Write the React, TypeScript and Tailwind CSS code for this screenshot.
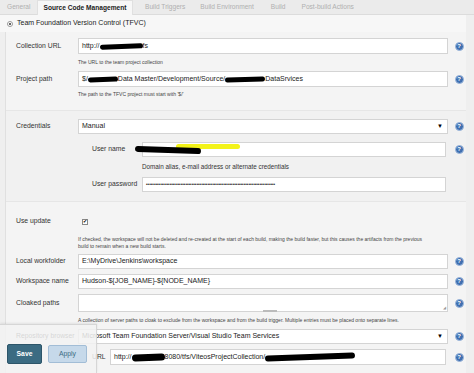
import React from "react";

const Help = () => (
  <div className="w-[18px] flex justify-center items-center shrink-0">
    <span className="ml-[4px] w-[9px] h-[9px] rounded-full bg-[#3f6fb0] border border-[#9db8dc] text-white text-[6px] font-bold leading-[7px] text-center">?</span>
  </div>
);

const Blob = ({ w, h = 6 }: { w: number; h?: number }) => (
  <span className="inline-block bg-black rounded-full align-middle -rotate-2" style={{ width: w, height: h }} />
);

const Input = ({ children, h = 15 }: { children?: React.ReactNode; h?: number }) => (
  <div className="flex-1 bg-white border border-[#d4d4d4] flex items-center pl-[3px] text-[7px] text-[#222] whitespace-nowrap overflow-hidden" style={{ height: h }}>
    {children}
  </div>
);

const Select = ({ children }: { children: React.ReactNode }) => (
  <div className="flex-1 h-[15px] bg-white border border-[#d4d4d4] flex items-center pl-[3px] pr-[4px] text-[7px] text-[#222] whitespace-nowrap">
    <span className="flex-1">{children}</span>
    <span className="text-[6px] text-black">▼</span>
  </div>
);

const Row = ({ label, children, help = true, mt = 0 }: { label: string; children: React.ReactNode; help?: boolean; mt?: number }) => (
  <div className="flex items-center" style={{ marginTop: mt }}>
    <div className="w-[62px] shrink-0 text-[6.8px] text-[#333]">{label}</div>
    {children}
    {help ? <Help /> : <div className="w-[18px] shrink-0" />}
  </div>
);

const HelpText = ({ children, h, pt }: { children: React.ReactNode; h: number; pt: number }) => (
  <div className="pl-[62px] text-[5px] leading-[7px] text-[#444]" style={{ height: h, paddingTop: pt }}>
    {children}
  </div>
);

export default function App() {
  return (
    <div className="relative w-[474px] h-[373px] overflow-hidden bg-[#efefef]" style={{ fontFamily: '"Liberation Sans", Arial, sans-serif' }}>
      {/* tabs */}
      <div className="h-[15px] flex items-stretch bg-[#ebebeb] border-b border-[#dcdcdc] text-[6.6px] text-[#b0b0b0]">
        <div className="pl-[7px] w-[37px] flex items-center">General</div>
        <div className="w-[96px] bg-[#f7f7f7] border-x border-t border-[#e0e0e0] -mb-px flex items-center justify-center font-bold text-[#1a1a1a]">Source Code Management</div>
        <div className="ml-[12px] flex items-center">Build Triggers</div>
        <div className="ml-[15px] flex items-center">Build Environment</div>
        <div className="ml-[17px] flex items-center">Build</div>
        <div className="ml-[16px] flex items-center">Post-build Actions</div>
      </div>
      {/* radio */}
      <div className="h-[17px] flex items-center pl-[7px] bg-[#f7f7f7] w-[466px]">
        <span className="w-[6px] h-[6px] rounded-full border border-[#999] bg-white flex items-center justify-center">
          <span className="w-[2px] h-[2px] rounded-full bg-[#333]" />
        </span>
        <span className="ml-[4px] text-[7px] text-[#222]">Team Foundation Version Control (TFVC)</span>
      </div>
      {/* panel */}
      <div className="ml-[5px] w-[461px] bg-[#f4f4f4] border-l border-[#e0e0e0] pl-[10px] pt-[6px] h-[341px]">
        <Row label="Collection URL">
          <Input h={16}>
            <span>http://</span>
            <Blob w={43} h={5} />
            <span>fs</span>
          </Input>
        </Row>
        <HelpText h={17} pt={5}>The URL to the team project collection</HelpText>
        <Row label="Project path">
          <Input h={16}>
            <span>$/</span>
            <Blob w={30} h={5} />
            <span>Data Master/Development/Source/</span>
            <Blob w={40} h={5} />
            <span>DataSrvices</span>
          </Input>
        </Row>
        <HelpText h={17} pt={4}>The path to the TFVC project must start with '$/'</HelpText>

        {/* credentials */}
        <div className="mt-[6px] -ml-[10px] pl-[10px] bg-[#f1f1f1] border-y border-[#e6e6e6] pt-[8px] pb-[9px]">
          <Row label="Credentials">
            <Select>Manual</Select>
          </Row>
          <div className="relative flex items-center mt-[8px]">
            <div className="w-[76px] shrink-0" />
            <div className="w-[50px] shrink-0 text-[6.8px] text-[#333]">User name</div>
            <Input h={15} />
            <div className="w-[2px]" />
            <Help />
            <span className="absolute left-[160px] top-[2px] w-[64px] h-[5px] bg-[#f2f200] rounded-full opacity-90" />
            <span className="absolute left-[119px] top-[5px] w-[66px] h-[6px] bg-black rounded-full rotate-2" />
          </div>
          <div className="h-[20px] pl-[126px] pt-[6px] text-[6.3px] leading-[8px] text-[#333]">Domain alias, e-mail address or alternate credentials</div>
          <div className="flex items-center">
            <div className="w-[76px] shrink-0" />
            <div className="w-[50px] shrink-0 text-[6.8px] text-[#333]">User password</div>
            <Input h={15}>
              <span className="text-[4.5px] leading-[5px] text-[#222]">{"•".repeat(82)}</span>
            </Input>
            <div className="w-[20px] shrink-0" />
          </div>
        </div>

        <Row label="Use update" help={false} mt={12}>
          <div className="flex-1 h-[15px] flex items-center">
            <span className="ml-[4px] w-[6px] h-[6px] border border-[#888] bg-white flex items-center justify-center text-[5px] leading-[5px] text-black">✔</span>
          </div>
        </Row>
        <HelpText h={25} pt={7}>
          If checked, the workspace will not be deleted and re-created at the start of each build, making the build faster, but this causes the artifacts from the previous
          <br />
          build to remain when a new build starts.
        </HelpText>
        <Row label="Local workfolder">
          <Input>E:\MyDrive\Jenkins\workspace</Input>
        </Row>
        <Row label="Workspace name" mt={5}>
          <Input>Hudson-${"{"}JOB_NAME{"}"}-${"{"}NODE_NAME{"}"}</Input>
        </Row>
        <Row label="Cloaked paths" mt={5}>
          <div className="relative flex-1 h-[18px] bg-white border border-[#d4d4d4]">
            <span className="absolute left-1/2 -bottom-px w-[14px] h-[2px] border-y border-[#bbb]" />
            <span className="absolute right-[1px] bottom-[1px] text-[4px] leading-[4px] text-[#999]">◢</span>
          </div>
        </Row>
        <HelpText h={17} pt={5}>A collection of server paths to cloak to exclude from the workspace and from the build trigger. Multiple entries must be placed onto separate lines.</HelpText>
        <Row label="Repository browser">
          <Select>Microsoft Team Foundation Server/Visual Studio Team Services</Select>
        </Row>
        <div className="flex items-center mt-[5px]">
          <div className="w-[76px] shrink-0" />
          <div className="w-[18px] shrink-0 text-[6.8px] text-[#333]">URL</div>
          <Input h={16}>
            <span>http://</span>
            <Blob w={33} h={7} />
            <span>8080/tfs/ViteosProjectCollection/</span>
            <Blob w={90} h={6} />
          </Input>
          <div className="w-[2px]" />
          <Help />
        </div>
      </div>

      {/* footer */}
      <div className="absolute left-0 top-[324px] w-[97px] h-[49px] bg-[#f2f2f2]/85 border-t border-r border-[#d6d6d6] shadow-[0_-1px_2px_rgba(0,0,0,0.08)]">
        <div className="flex items-center pl-[7px] pt-[19px] gap-[6px]">
          <div className="w-[35px] h-[20px] bg-[#3b6b82] border border-[#2d5569] rounded-[2px] text-white text-[6.8px] font-bold flex items-center justify-center">Save</div>
          <div className="w-[39px] h-[18px] bg-[#c6d9ea] border border-[#a2bdd6] rounded-[2px] text-[#3b6b82] text-[6.8px] flex items-center justify-center">Apply</div>
        </div>
      </div>
    </div>
  );
}
